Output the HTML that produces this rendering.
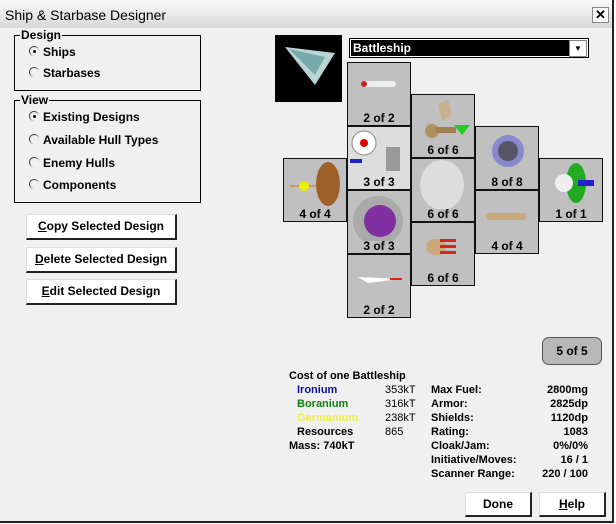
<!DOCTYPE html><html><head><style>
body{margin:0;width:616px;height:524px;overflow:hidden;background:#fff;font-family:"Liberation Sans",sans-serif;}
#win{position:absolute;left:0;top:0;width:612px;height:521px;background:#f0f0f0;border-right:2px solid #222;border-bottom:2px solid #222;}
#title{position:absolute;left:0;top:0;width:612px;height:28px;background:linear-gradient(#fafafa,#d8d8d8);font-size:14px;line-height:30px;padding-left:5px;box-sizing:border-box;color:#000}
#x{position:absolute;right:3px;top:7px;width:15px;height:14px;background:#fff;border:1px solid #888;font-size:13px;font-weight:bold;line-height:14px;text-align:center}
.a{position:absolute;white-space:nowrap}
.grp{position:absolute;border:1px solid #000;}
.grp .lg{position:absolute;top:-8px;left:5px;background:#f0f0f0;font-size:12px;font-weight:bold;padding:0 1px}
.r{position:absolute;font-size:12px;font-weight:bold;}
.r i{display:inline-block;width:9px;height:9px;border-radius:50%;border-left:1px solid #333;border-top:1px solid #333;margin-right:4px;font-style:normal;position:relative;top:0px}
.r i.s:after{content:"";position:absolute;left:3px;top:3px;width:3px;height:3px;background:#000;border-radius:50%}
.btn{position:absolute;width:148px;height:23px;background:#fff;border-right:2px solid #222;border-bottom:2px solid #222;border-top:1px solid #ddd;border-left:1px solid #ddd;font-size:12px;font-weight:bold;text-align:center;line-height:23px}
.t{position:absolute;width:62px;height:62px;background:#c0c0c0;border:1px solid #111;}
.t svg{position:absolute;left:0;top:0}
.t b{position:absolute;bottom:0px;left:0;right:0;text-align:center;font-size:12px;}
.st{font-size:11px;font-weight:bold;position:absolute;white-space:nowrap}
</style></head><body><div id="win">
<div id="title">Ship &amp; Starbase Designer<div id="x">✕</div></div>
<div class="grp" style="left:14px;top:35px;width:185px;height:54px"><span class="lg">Design</span></div>
<div class="r" style="left:29px;top:45px"><i class="s"></i>Ships</div>
<div class="r" style="left:29px;top:66px"><i></i>Starbases</div>
<div class="grp" style="left:14px;top:100px;width:185px;height:101px"><span class="lg">View</span></div>
<div class="r" style="left:29px;top:110px"><i class="s"></i>Existing Designs</div>
<div class="r" style="left:29px;top:133px"><i></i>Available Hull Types</div>
<div class="r" style="left:29px;top:156px"><i></i>Enemy Hulls</div>
<div class="r" style="left:29px;top:178px"><i></i>Components</div>
<div class="btn" style="left:26px;top:214px"><u>C</u>opy Selected Design</div>
<div class="btn" style="left:26px;top:247px"><u>D</u>elete Selected Design</div>
<div class="btn" style="left:26px;top:279px"><u>E</u>dit Selected Design</div>
<div class="a" style="left:275px;top:35px;width:67px;height:67px;background:#000"><svg width="67" height="67"><polygon points="10,12 60,18 40,50" fill="#b8d4d4"/><polygon points="14,14 50,22 40,40" fill="#7aa"/></svg></div>
<div class="a" style="left:349px;top:38px;width:238px;height:18px;border:1px solid #000;background:#fff"><div style="position:absolute;left:1px;top:1px;width:216px;height:16px;background:#000;color:#fff;font-size:12px;font-weight:bold;line-height:16px;padding-left:2px">Battleship</div><div style="position:absolute;right:1px;top:1px;width:16px;height:15px;background:#fff;border:1px solid #888;font-size:8px;text-align:center;line-height:15px">▼</div></div>
<div class="t" style="left:347px;top:62px"><svg width="62" height="50"><rect x="14" y="18" width="34" height="6" rx="3" fill="#eee"/><circle cx="16" cy="21" r="3" fill="#c22"/></svg><b>2 of 2</b></div>
<div class="t" style="left:347px;top:126px;background:#ddd"><svg width="62" height="50"><circle cx="16" cy="16" r="12" fill="#fff" stroke="#888"/><circle cx="16" cy="16" r="4" fill="#d00"/><rect x="2" y="32" width="12" height="4" fill="#22c"/><rect x="38" y="20" width="14" height="24" fill="#999"/></svg><b>3 of 3</b></div>
<div class="t" style="left:347px;top:190px"><svg width="62" height="50"><circle cx="30" cy="30" r="25" fill="#aaa"/><circle cx="32" cy="30" r="16" fill="#8030a0"/></svg><b>3 of 3</b></div>
<div class="t" style="left:347px;top:254px"><svg width="62" height="50"><polygon points="10,22 52,24 20,28" fill="#fff"/><rect x="42" y="23" width="12" height="2" fill="#d22"/></svg><b>2 of 2</b></div>
<div class="t" style="left:411px;top:94px"><svg width="62" height="50"><polygon points="26,10 36,4 40,20 30,26" fill="#c8b090"/><circle cx="20" cy="36" r="7" fill="#b09060"/><rect x="24" y="32" width="20" height="6" fill="#a08050"/><polygon points="42,30 58,30 50,40" fill="#2c2"/></svg><b>6 of 6</b></div>
<div class="t" style="left:411px;top:158px"><svg width="62" height="50"><ellipse cx="30" cy="26" rx="22" ry="25" fill="#ddd"/></svg><b>6 of 6</b></div>
<div class="t" style="left:411px;top:222px"><svg width="62" height="50"><ellipse cx="24" cy="24" rx="10" ry="8" fill="#c8a878"/><rect x="28" y="16" width="16" height="3" fill="#d22"/><rect x="28" y="22" width="16" height="3" fill="#d22"/><rect x="28" y="28" width="16" height="3" fill="#d22"/></svg><b>6 of 6</b></div>
<div class="t" style="left:475px;top:126px"><svg width="62" height="50"><circle cx="32" cy="24" r="16" fill="#8888cc"/><circle cx="32" cy="24" r="10" fill="#556"/></svg><b>8 of 8</b></div>
<div class="t" style="left:475px;top:190px"><svg width="62" height="50"><rect x="10" y="22" width="40" height="7" rx="3" fill="#c8a878"/></svg><b>4 of 4</b></div>
<div class="t" style="left:283px;top:158px"><svg width="62" height="50"><line x1="6" y1="27" x2="40" y2="27" stroke="#c96" stroke-width="2"/><ellipse cx="44" cy="25" rx="12" ry="22" fill="#a0602a"/><circle cx="20" cy="27" r="5" fill="#ee0"/></svg><b>4 of 4</b></div>
<div class="t" style="left:539px;top:158px"><svg width="62" height="50"><ellipse cx="36" cy="24" rx="10" ry="20" fill="#2a2"/><circle cx="24" cy="24" r="9" fill="#eee"/><rect x="38" y="21" width="16" height="6" fill="#22c"/></svg><b>1 of 1</b></div>
<div class="a" style="left:542px;top:337px;width:58px;height:26px;background:#b8b8b8;border:1px solid #555;border-radius:7px;font-size:12px;font-weight:bold;text-align:center;line-height:26px">5 of 5</div>
<div class="st" style="left:289px;top:370px;font-size:11px">Cost of one Battleship</div>
<div class="st" style="left:297px;top:384px;color:#1010a0">Ironium</div>
<div class="st" style="left:297px;top:398px;color:#108010">Boranium</div>
<div class="st" style="left:297px;top:412px;color:#f0f040">Germanium</div>
<div class="st" style="left:297px;top:426px">Resources</div>
<div class="st" style="left:289px;top:440px">Mass: 740kT</div>
<div class="st" style="left:385px;top:384px;font-weight:normal">353kT</div>
<div class="st" style="left:385px;top:398px;font-weight:normal">316kT</div>
<div class="st" style="left:385px;top:412px;font-weight:normal">238kT</div>
<div class="st" style="left:385px;top:426px;font-weight:normal">865</div>
<div class="st" style="left:431px;top:384px">Max Fuel:</div>
<div class="st" style="left:431px;top:398px">Armor:</div>
<div class="st" style="left:431px;top:412px">Shields:</div>
<div class="st" style="left:431px;top:426px">Rating:</div>
<div class="st" style="left:431px;top:440px">Cloak/Jam:</div>
<div class="st" style="left:431px;top:454px">Initiative/Moves:</div>
<div class="st" style="left:431px;top:468px">Scanner Range:</div>
<div class="st" style="right:24px;top:384px">2800mg</div>
<div class="st" style="right:24px;top:398px">2825dp</div>
<div class="st" style="right:24px;top:412px">1120dp</div>
<div class="st" style="right:24px;top:426px">1083</div>
<div class="st" style="right:24px;top:440px">0%/0%</div>
<div class="st" style="right:24px;top:454px">16 / 1</div>
<div class="st" style="right:24px;top:468px">220 / 100</div>
<div class="btn" style="left:465px;top:492px;width:64px;height:22px;line-height:22px">Done</div>
<div class="btn" style="left:539px;top:492px;width:64px;height:22px;line-height:22px"><u>H</u>elp</div>
</div></body></html>
